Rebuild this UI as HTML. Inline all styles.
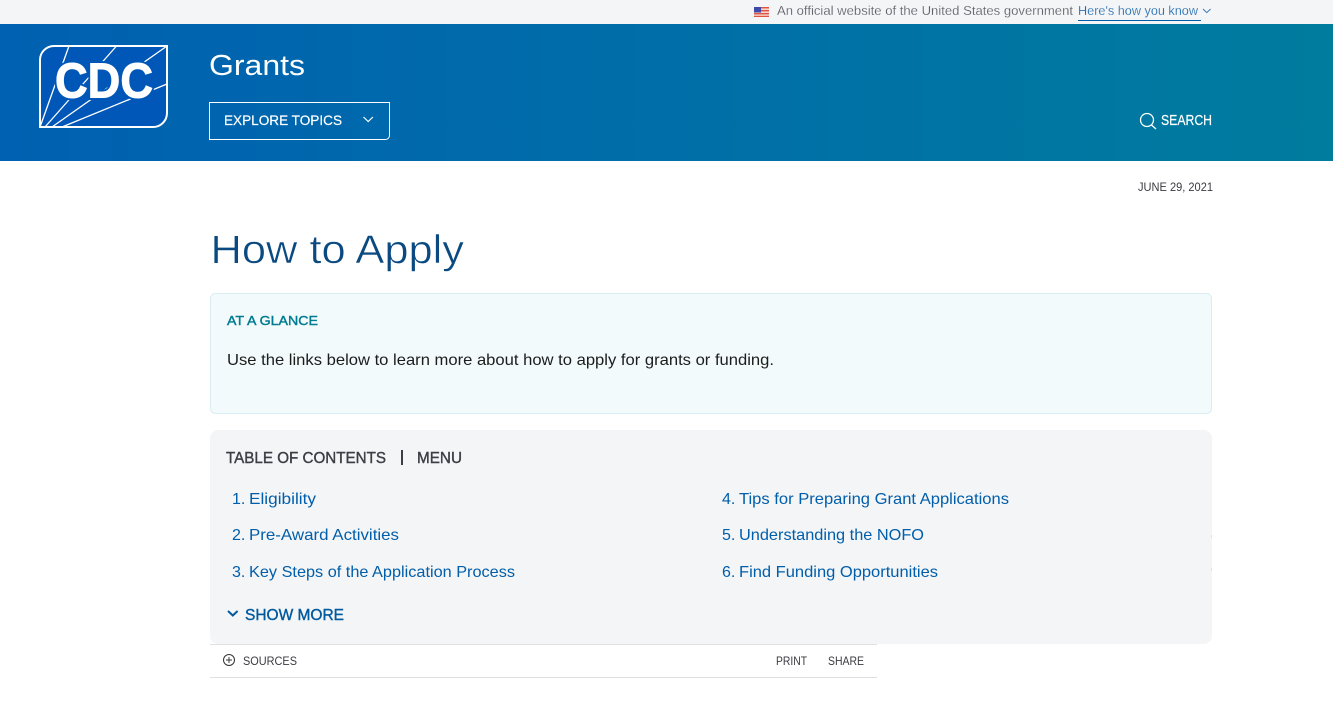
<!DOCTYPE html>
<html lang="en">
<head>
<meta charset="utf-8">
<title>How to Apply | Grants | CDC</title>
<style>
html,body{margin:0;padding:0;background:#fff;width:1333px;height:715px;overflow:hidden}
svg{display:block;position:absolute;left:0;top:0}
text{font-family:"Liberation Sans",sans-serif;white-space:pre}
.l{fill:#005eaa;font-size:16px}
</style>
</head>
<body>
<svg width="1333" height="715" viewBox="0 0 1333 715" xmlns="http://www.w3.org/2000/svg">
<defs>
<linearGradient id="g" x1="0" x2="1" y1="0" y2="0"><stop offset="0" stop-color="#0060b1"/><stop offset="1" stop-color="#007c9e"/></linearGradient>
</defs>
<rect width="1333" height="715" fill="#fff"/>
<!-- gov banner -->
<rect width="1333" height="24" fill="#f4f5f7"/>
<g>
<rect x="754" y="7" width="15" height="10" fill="#f5d5cf"/>
<rect x="754" y="7" width="15" height="1.4" fill="#e0533f"/>
<rect x="754" y="10" width="15" height="1.4" fill="#e0533f"/>
<rect x="754" y="13" width="15" height="1.4" fill="#e0533f"/>
<rect x="754" y="15.8" width="15" height="1.2" fill="#e0533f"/>
<rect x="754" y="7" width="7" height="5.5" fill="#3f4aa8"/>
</g>
<text x="777" y="15" font-size="12.5" fill="#5c5c66" stroke="#f4f5f7" stroke-width=".15" textLength="296" lengthAdjust="spacingAndGlyphs">An official website of the United States government</text>
<text x="1078" y="15" font-size="12.5" fill="#1f69ad" stroke="#f4f5f7" stroke-width=".15" textLength="120" lengthAdjust="spacingAndGlyphs">Here's how you know</text>
<rect x="1078" y="20" width="123" height="1" fill="#005eaa"/>
<path d="M1203 9l3.8 3.6L1210.6 9" fill="none" stroke="#3a78b5" stroke-width="1"/>
<!-- header -->
<rect y="24" width="1333" height="137" fill="url(#g)"/>
<!-- logo -->
<path d="M54 46H167V113a14 14 0 0 1-14 14H40V60a14 14 0 0 1 14-14z" fill="#0057b7" stroke="#fff" stroke-width="2"/>
<g stroke="#fff" stroke-width="1.3" fill="none">
<path d="M40 127L69 46"/>
<path d="M45 127L116.500 46"/>
<path d="M52 127L167 46"/>
<path d="M62 127L167 84"/>
</g>
<text x="55" y="97.500" font-size="49" font-weight="700" fill="#0057b7" stroke="#0057b7" stroke-width="5" textLength="98" lengthAdjust="spacingAndGlyphs">CDC</text>
<text x="55" y="97.500" font-size="49" font-weight="700" fill="#fff" stroke="#fff" stroke-width="1" textLength="98" lengthAdjust="spacingAndGlyphs">CDC</text>
<text x="209" y="75" font-size="29" fill="#fff" textLength="96" lengthAdjust="spacingAndGlyphs">Grants</text>
<path d="M209.500 102.500H389.500V135.500a4 4 0 0 1-4 4H209.500z" fill="none" stroke="#fff" stroke-width="1"/>
<text x="224" y="125" font-size="14" fill="#fff" stroke="#fff" stroke-width=".2" textLength="118" lengthAdjust="spacingAndGlyphs">EXPLORE TOPICS</text>
<path d="M363.500 117l4.700 4.500 4.700-4.500" fill="none" stroke="#fff" stroke-width="1.200"/>
<circle cx="1147" cy="120" r="6.500" fill="none" stroke="#fff" stroke-width="1.300"/>
<path d="M1151.500 125l4.500 4" fill="none" stroke="#fff" stroke-width="1.300"/>
<text x="1161" y="125" font-size="14.500" fill="#fff" stroke="#fff" stroke-width=".2" textLength="51" lengthAdjust="spacingAndGlyphs">SEARCH</text>
<!-- date -->
<text x="1138" y="191" font-size="11.500" fill="#3a3a42" textLength="75" lengthAdjust="spacingAndGlyphs">JUNE 29, 2021</text>
<!-- title -->
<text x="210.500" y="263" font-size="40" fill="#0b4a80" stroke="#fff" stroke-width=".55" textLength="253.500" lengthAdjust="spacingAndGlyphs">How to Apply</text>
<!-- at a glance -->
<rect x="210.500" y="293.500" width="1001" height="120" rx="5" fill="#f2fafc" stroke="#d9edf2"/>
<text x="227" y="325" font-size="13" fill="#007c91" stroke="#007c91" stroke-width=".4" textLength="91" lengthAdjust="spacingAndGlyphs">AT A GLANCE</text>
<text x="227" y="365" font-size="16" fill="#1c1c1c" textLength="547" lengthAdjust="spacingAndGlyphs">Use the links below to learn more about how to apply for grants or funding.</text>
<!-- toc -->
<rect x="210" y="430" width="1002" height="214" rx="8" fill="#f4f5f7"/>
<text x="226" y="463" font-size="16" fill="#3d3d45" stroke="#3d3d45" stroke-width=".4" textLength="160" lengthAdjust="spacingAndGlyphs">TABLE OF CONTENTS</text>
<rect x="401" y="450" width="2" height="15" fill="#3d3d45"/>
<text x="417" y="463" font-size="16" fill="#3d3d45" stroke="#3d3d45" stroke-width=".4" textLength="45" lengthAdjust="spacingAndGlyphs">MENU</text>
<text class="l" x="232" y="504">1.</text>
<text class="l" x="249" y="504" textLength="67" lengthAdjust="spacingAndGlyphs">Eligibility</text>
<text class="l" x="232" y="540">2.</text>
<text class="l" x="249" y="540" textLength="150" lengthAdjust="spacingAndGlyphs">Pre-Award Activities</text>
<text class="l" x="232" y="577">3.</text>
<text class="l" x="249" y="577" textLength="266" lengthAdjust="spacingAndGlyphs">Key Steps of the Application Process</text>
<text class="l" x="722" y="504">4.</text>
<text class="l" x="739" y="504" textLength="270" lengthAdjust="spacingAndGlyphs">Tips for Preparing Grant Applications</text>
<text class="l" x="722" y="540">5.</text>
<text class="l" x="739" y="540" textLength="185" lengthAdjust="spacingAndGlyphs">Understanding the NOFO</text>
<text class="l" x="722" y="577">6.</text>
<text class="l" x="739" y="577" textLength="199" lengthAdjust="spacingAndGlyphs">Find Funding Opportunities</text>
<path d="M228 611l4.800 4.500 4.800-4.500" fill="none" stroke="#005a9e" stroke-width="2"/>
<text x="245" y="620" font-size="16" fill="#005a9e" stroke="#005a9e" stroke-width=".4" textLength="99" lengthAdjust="spacingAndGlyphs">SHOW MORE</text>
<rect x="1211" y="535" width="1" height="3" fill="#f3dfc0"/>
<rect x="1211" y="568" width="1" height="3" fill="#f3dfc0"/>
<!-- sources strip -->
<rect x="210" y="644" width="667" height="1" fill="#e0e0e0"/>
<rect x="210" y="677" width="667" height="1" fill="#e0e0e0"/>
<circle cx="229" cy="660" r="5.500" fill="none" stroke="#333" stroke-width="1"/>
<path d="M229 657v6M226 660h6" stroke="#333" stroke-width=".9"/>
<text x="243" y="665" font-size="12" fill="#3a3a42" textLength="54" lengthAdjust="spacingAndGlyphs">SOURCES</text>
<text x="776" y="665" font-size="12" fill="#3a3a42" textLength="31" lengthAdjust="spacingAndGlyphs">PRINT</text>
<text x="828" y="665" font-size="12" fill="#3a3a42" textLength="36" lengthAdjust="spacingAndGlyphs">SHARE</text>
</svg>
</body>
</html>
